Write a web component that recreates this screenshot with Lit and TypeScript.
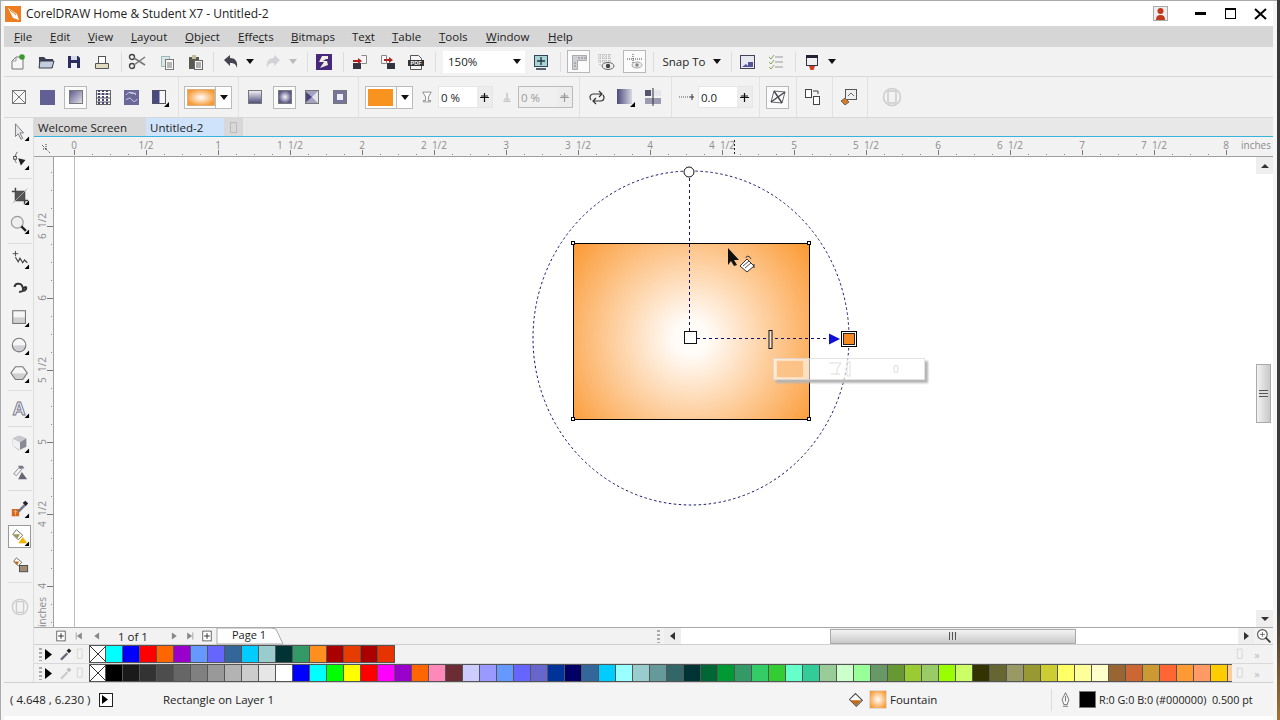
import { LitElement, html, svg, css } from 'lit'
import { customElement } from 'lit/decorators.js'

type Item = { c: number; w: number; t: unknown; cls?: string }

// places items along a flex row/column by their centre, gaps computed from the data
function flow(items: Item[], origin: number, vertical = false) {
  let end = origin
  return items.map((it) => {
    const gap = it.c - it.w / 2 - end
    end = it.c + it.w / 2
    const st = vertical ? `margin-top:${gap}px;height:${it.w}px` : `margin-left:${gap}px;width:${it.w}px`
    return html`<div class="item ${it.cls ?? ''}" style=${st}>${it.t}</div>`
  })
}

const ic = (f: unknown, size = 20) =>
  html`<svg width=${size} height=${size} viewBox="0 0 20 20">${f}</svg>`
const tb = (f: unknown) => html`<svg width="20" height="20" viewBox="0 0 22 22">${f}<path d="M21 16v5h-5z" fill="#000"/></svg>`
const arrow = (c = '#111') => html`<svg width="8" height="5" viewBox="0 0 8 5"><path d="M0 0h8L4 5z" fill=${c}/></svg>`
const sep = (c: number): Item => ({ c, w: 1, t: '', cls: 'sep' })
const b = (c: number, f: unknown, cls = ''): Item => ({ c, w: 22, t: ic(f), cls })

const I = {
  fresh: svg`<path d="M4 9l4-4h7v12H4z" fill="#f6f6f6" stroke="#777"/><path d="M4 9h4V5" fill="none" stroke="#999"/><circle cx="14" cy="5" r="2.800" fill="#3b9a2c"/>`,
  open: svg`<path d="M3 5h5l2 2h7v9H3z" fill="#3a3f52"/><path d="M4 9h14l-2 7H3z" fill="#c4cddb" stroke="#3a3f52"/>`,
  save: svg`<path d="M4 4h10l2 2v10H4z" fill="#2b2d5e"/><rect x="7" y="4" width="6" height="4" fill="#d9dbe8"/><rect x="7" y="11" width="6" height="5" fill="#f0f0f4"/>`,
  print: svg`<rect x="6.500" y="4.500" width="7" height="7" fill="#fff" stroke="#555"/><path d="M3.500 11.500h13v5h-13z" fill="#e0dcc0" stroke="#555"/>`,
  cut: svg`<circle cx="4" cy="5" r="2.500" fill="none" stroke="#444" stroke-width="1.400"/><circle cx="4" cy="14" r="2.500" fill="none" stroke="#444" stroke-width="1.400"/><path d="M6 6l11 7M6 13l11-8" stroke="#777" stroke-width="1.500"/>`,
  copy: svg`<rect x="4.500" y="4.500" width="8" height="10" fill="#dbe7e7" stroke="#9bb"/><rect x="8.500" y="7.500" width="8" height="10" fill="#f6f6f6" stroke="#777"/><path d="M10 11h5M10 13h5M10 15h5" stroke="#777"/>`,
  paste: svg`<rect x="4" y="5" width="10" height="12" fill="#5a594f"/><rect x="7" y="3" width="4" height="4" fill="#c2be9f"/><rect x="9.500" y="8.500" width="8" height="9" fill="#f6f6f6" stroke="#666"/><path d="M11 11h5M11 13h5M11 15h5" stroke="#666"/>`,
  undo: svg`<path d="M3 8l6-5v3c5 0 8 3 7 10-1-4-3-5-7-5v3z" fill="#44444e"/>`,
  redo: svg`<path d="M17 8l-6-5v3c-5 0-8 3-7 10 1-4 3-5 7-5v3z" fill="#d2d2d6"/>`,
  corel: svg`<rect x="2" y="2" width="16" height="16" fill="#47287f"/><path d="M14 4H8L5 10h5l-4 6 8-3-1-4H9l3-2h2z" fill="#f2f0dc"/>`,
  imp: svg`<path d="M11.500 3.500h5v8h-5" fill="#f6f6f6" stroke="#888"/><rect x="3" y="11" width="8" height="6" fill="#33333f"/><path d="M3 8h5V6l4 3-4 3v-2H3z" fill="#b02020"/>`,
  exp: svg`<path d="M3.500 3.500h5v8h-5z" fill="#f6f6f6" stroke="#888"/><rect x="9" y="11" width="8" height="6" fill="#33333f"/><path d="M6 7h5V5l4 3-4 3V9H6z" fill="#b02020"/>`,
  pdf: svg`<path d="M4.500 3.500h8l3 3v11h-11z" fill="#f6f6f6" stroke="#555"/><rect x="2" y="8" width="16" height="6" fill="#333"/><text x="10" y="13" font-size="5.500" font-weight="700" text-anchor="middle" fill="#fff" font-family="Liberation Sans">PDF</text>`,
  fit: svg`<rect x="3.500" y="3.500" width="13" height="11" fill="#a8d4d4" stroke="#345"/><path d="M10 5v8M6 9h8M5 17h10" stroke="#234" stroke-width="1.300"/>`,
  ruler: svg`<path d="M3.500 3.500h14v5h-9v9h-5z" fill="#cfcfd6" stroke="#aaa"/><path d="M10 5v2M13 5v2M16 5v2M5 11h2M5 14h2" stroke="#888"/>`,
  gridEye: svg`<path d="M2 3h13M2 6h13M2 9h13M4 2v11M7 2v11M10 2v11M13 2v11" stroke="#aaa" stroke-dasharray="1 1"/><ellipse cx="12" cy="14" rx="6" ry="3.500" fill="#eee" stroke="#666"/><circle cx="12" cy="14" r="2.200" fill="#444"/>`,
  guideEye: svg`<path d="M2 7h15M8 2v13" stroke="#444" stroke-dasharray="1 1"/><ellipse cx="12" cy="13" rx="5" ry="3" fill="#eee" stroke="#aaa"/><circle cx="12" cy="13" r="1.800" fill="#888"/>`,
  app: svg`<rect x="2.500" y="3.500" width="14" height="13" fill="#e8e8f2" stroke="#445"/><path d="M4 15l4-3 2 2v-4h5v5z" fill="#55549a"/>`,
  options: svg`<path d="M3 5l2 2 3-4M3 10l2 2 3-4M3 15l2 2 3-4" fill="none" stroke="#8aa55a"/><path d="M9 5h8M9 10h8M9 15h8" stroke="#999"/>`,
  full: svg`<rect x="4.500" y="3.500" width="11" height="10" fill="#f0f0f0" stroke="#334"/><rect x="4" y="3" width="12" height="3" fill="#223"/><path d="M7 14h6l-1.500 4h-3z" fill="#d83a20"/>`,
  none: svg`<rect x="3.500" y="3.500" width="13" height="13" fill="#f6f6f6" stroke="#777"/><path d="M3.500 3.500l13 13M16.500 3.500l-13 13" stroke="#777"/>`,
  uniform: svg`<rect x="3" y="3" width="15" height="15" fill="#625f94"/>`,
  fountain: svg`<defs><linearGradient id="fg" x1="0" y1="0" x2="1" y2="1"><stop offset="0" stop-color="#5a5788"/><stop offset="1" stop-color="#e4e4ee"/></linearGradient></defs><rect x="3.500" y="3.500" width="13" height="13" fill="url(#fg)" stroke="#777"/>`,
  pattern: svg`<rect x="3.500" y="3.500" width="14" height="14" fill="#fff" stroke="#666"/><path d="M3 7h15M3 11h15M3 15h15" stroke="#555"/><path d="M6 3v15M10 3v15M14 3v15" stroke="#4a4a7a" stroke-width="2" stroke-dasharray="2 1"/>`,
  texture: svg`<rect x="3" y="3" width="15" height="15" fill="#6a6799"/><path d="M5 8c3-4 8-3 10 0M5 13c3-3 5-2 6 0s4 2 5-1M8 5c2 2 5 2 7 1" fill="none" stroke="#d0d0e4"/>`,
  post: svg`<rect x="3.500" y="3.500" width="13" height="13" fill="#f6f6f6" stroke="#555"/><rect x="3.500" y="3.500" width="7" height="13" fill="#4b4a80"/><path d="M20 15v5h-5z" fill="#000"/>`,
  linear: svg`<defs><linearGradient id="lg" x1="0" y1="0" x2="0" y2="1"><stop offset="0" stop-color="#f4f4f8"/><stop offset="1" stop-color="#4b4a7a"/></linearGradient></defs><rect x="3.500" y="3.500" width="13" height="13" fill="url(#lg)" stroke="#777"/>`,
  elliptical: svg`<defs><radialGradient id="eg"><stop offset="0" stop-color="#f4f4f8"/><stop offset="1" stop-color="#5a5788"/></radialGradient></defs><rect x="3.500" y="3.500" width="13" height="13" fill="url(#eg)" stroke="#777"/>`,
  conical: svg`<rect x="3.500" y="3.500" width="13" height="13" fill="#a4a3bf" stroke="#777"/><path d="M4 10h6L4 5zM4 10h6l-6 5z" fill="#45437a"/><path d="M16 4v12l-6-6z" fill="#e4e4ee"/>`,
  rectangular: svg`<rect x="3.500" y="3.500" width="13" height="13" fill="#76749b" stroke="#777"/><rect x="7" y="7" width="6" height="6" fill="#eeeef5"/>`,
  glass: svg`<path d="M4 3h12l-4 7v5h3v2H5v-2h3v-5z" fill="#fff" stroke="#666"/>`,
  glassOff: svg`<path d="M10 4v8M6 13h8M5 16h10" stroke="#c4c4c4" stroke-width="2"/>`,
  loop: svg`<path d="M4 13c-2-2-1-6 2-6h9M12 4l3 3-3 3M16 8c2 2 1 6-2 6H6M9 11l-3 3 3 3" fill="none" stroke="#333" stroke-width="1.200"/>`,
  mirror: svg`<defs><linearGradient id="mg"><stop offset="0" stop-color="#4b4a7a"/><stop offset="1" stop-color="#d8d8e4"/></linearGradient></defs><rect x="2" y="2" width="15" height="15" fill="url(#mg)"/><path d="M20 15v5h-5z" fill="#000"/>`,
  align: svg`<rect x="2" y="3" width="16" height="6" fill="#55556e"/><rect x="2" y="11" width="16" height="6" fill="#9a9ab0"/><rect x="8" y="3" width="10" height="6" fill="#e6e6ee"/><path d="M10 1v18" stroke="#333"/>`,
  dash: svg`<path d="M2 10h12" stroke="#555" stroke-dasharray="1 1"/><path d="M15 7v6M13 10h4" stroke="#333"/>`,
  free: svg`<path d="M6 4l11 1-3 11-11-1z" fill="none" stroke="#666"/><path d="M6 4l8 12M17 5L3 15" stroke="#445" stroke-width="1.400"/>`,
  swap: svg`<rect x="2.500" y="2.500" width="6" height="8" fill="#fff" stroke="#444"/><rect x="10.500" y="9.500" width="6" height="8" fill="#fff" stroke="#444"/><path d="M10 4h5v3" fill="none" stroke="#444"/>`,
  copyFill: svg`<rect x="6.500" y="2.500" width="11" height="10" fill="#eee" stroke="#555"/><path d="M9 9l3-3 3 3" stroke="#666" fill="none"/><path d="M2 14l4-3 4 4-4 3z" fill="#d87a20" stroke="#666"/>`,
  hint: svg`<circle cx="10" cy="10" r="8.500" fill="none" stroke="#ccc" stroke-width="1.500"/><rect x="6" y="4" width="8" height="12" rx="1" fill="none" stroke="#ccc" stroke-width="1.500"/>`,
  dropper: svg`<path d="M4 16l8-8 2 2-8 8z" fill="#667"/><path d="M12 6l3-3 3 3-3 3z" fill="#222"/>`,
  dropperOff: svg`<path d="M4 16l8-8 2 2-8 8z" fill="#ccc"/><path d="M12 6l3-3 3 3-3 3z" fill="#bbb"/>`,
  chip: svg`<rect x="6" y="3" width="7" height="13" fill="none" stroke="#ccc"/>`,
  bucket: svg`<path d="M10 3l8 8-7 7-8-8z" fill="#fff" stroke="#444" stroke-width="1.200"/><path d="M4 11h13l-6 6z" fill="#c06a1a"/>`,
  pen: svg`<path d="M10 2l4 8-2 6H8l-2-6z" fill="#f4f4f4" stroke="#666"/><path d="M7 18h6M10 6v6" stroke="#666"/>`,
  addPage: svg`<rect x="4" y="3" width="12" height="14" fill="#fff" stroke="#333"/><path d="M10 6v8M6 10h8" stroke="#333" stroke-width="1.400"/>`,
  first: svg`<path d="M6 5v10" stroke="#888"/><path d="M14 5v10l-7-5z" fill="#888"/>`,
  prev: svg`<path d="M13 5v10l-7-5z" fill="#888"/>`,
  next: svg`<path d="M7 5v10l7-5z" fill="#888"/>`,
  last: svg`<path d="M14 5v10" stroke="#888"/><path d="M6 5v10l7-5z" fill="#888"/>`,
  magnify: svg`<circle cx="8" cy="8" r="6" fill="#fff" stroke="#555" stroke-width="1.400"/><path d="M5 8h6M8 5v6" stroke="#555"/><path d="M12 12l6 6" stroke="#333" stroke-width="2"/>`,
}

const T = {
  pick: svg`<path d="M6 2v14l3-3 3 6 2-1-3-6h4z" fill="#e6e6ea" stroke="#777"/>`,
  shape: svg`<path d="M8 1C5 6 4 9 7 13" fill="none" stroke="#555"/><rect x="4" y="6" width="3" height="3" fill="#fff" stroke="#444"/><path d="M9 8l8 2-5 6z" fill="#222"/>`,
  crop: svg`<path d="M6 2v14h14M2 6h14v14" fill="none" stroke="#444" stroke-width="1.600"/><rect x="6" y="6" width="10" height="10" fill="#555"/><path d="M3 19L19 3" stroke="#aaa"/>`,
  zoom: svg`<circle cx="8" cy="8" r="6.500" fill="#eee" stroke="#999" stroke-width="1.300"/><path d="M12.500 12.500l5 5" stroke="#222" stroke-width="2.600"/>`,
  freehand: svg`<path d="M6 1v6M3 4h6" stroke="#444"/><path d="M6 8l3 5 2-4 3 5 2-3 3 3" fill="none" stroke="#444" stroke-width="1.300"/>`,
  smart: svg`<path d="M4 9c0-4 6-5 8-2s1 6 2 6 3-1 3-3-3-1-3 1-3 4-5 3" fill="none" stroke="#333" stroke-width="2.200"/>`,
  rect: svg`<defs><linearGradient id="r1" x1="0" y1="0" x2="0" y2="1"><stop offset=".5" stop-color="#f6f6f6"/><stop offset=".55" stop-color="#d0d0d4"/></linearGradient></defs><rect x="3" y="3" width="14" height="14" fill="url(#r1)" stroke="#777" stroke-width="1.200"/>`,
  ell: svg`<circle cx="10" cy="10" r="7.500" fill="url(#r1)" stroke="#777" stroke-width="1.200"/>`,
  poly: svg`<path d="M6 3h8l5 7-5 7H6l-5-7z" fill="url(#r1)" stroke="#777" stroke-width="1.200"/>`,
  text: svg`<text x="10" y="18" font-size="20" font-weight="700" text-anchor="middle" fill="#eef" stroke="#778" font-family="Liberation Sans">A</text>`,
  cube: svg`<path d="M10 2l8 3v9l-8 4-7-5V5z" fill="#8a8a94"/><path d="M10 2l8 3-7 4-8-4z" fill="#c8c8d0"/><path d="M3 5l8 4v9l-8-5z" fill="#f0f0f4"/>`,
  drop: svg`<path d="M3 12l6-7 3 2-6 7z" fill="none" stroke="#888"/><path d="M8 3h5l2 3H9z" fill="#778"/><path d="M12 10l6 8H8z" fill="#667"/>`,
  eyed: svg`<rect x="2" y="11" width="8" height="8" fill="#d8661c"/><path d="M4 14h4M6 12v6" stroke="#f6c080"/><path d="M8 13l7-7 2 2-7 7z" fill="#778"/><path d="M14 4l3-2 3 3-3 3z" fill="#223"/>`,
  fill: svg`<path d="M7 3l7 6-5 5-6-6z" fill="#fff" stroke="#666"/><path d="M3 8h8l-3 5z" fill="#995"/><path d="M14 11l5 7H9z" fill="#f2b400"/>`,
  smartFill: svg`<path d="M6 2l6 5-4 4-5-5z" fill="#fff" stroke="#666"/><path d="M3 6h6l-2 4z" fill="#c06a1a"/><rect x="9.500" y="10.500" width="9" height="7" fill="#a08a70" stroke="#444"/>`,
}

const menu = [['F', 'ile', 14], ['E', 'dit', 50], ['V', 'iew', 88], ['L', 'ayout', 131], ['O', 'b', 185, 'j', 'ect'], ['E', 'ffe', 238, 'c', 'ts'], ['B', 'itmaps', 291], ['Te', '', 352, 'x', 't'], ['T', 'able', 392], ['T', 'ools', 439], ['W', 'indow', 486], ['H', 'elp', 548]]

const row1 = ['#00ffff', '#0000ff', '#ff0000', '#ff6600', '#9900cc', '#6699ff', '#6666ff', '#336699', '#00ccff', '#99cccc', '#003333', '#339966', '#ff9020', '#aa0000', '#e63c00', '#aa0000', '#e63300']
const row2 = ['#000', '#1a1a1a', '#333', '#4d4d4d', '#666', '#808080', '#999', '#b3b3b3', '#ccc', '#e6e6e6', '#fff', '#00f', '#0ff', '#0f0', '#ff0', '#f00', '#f0f', '#90c', '#f60', '#f8b', '#6b2d33', '#ccf', '#99f', '#69f', '#66f', '#66c', '#039', '#006', '#369', '#0cf', '#9ff', '#9cc', '#699', '#366', '#033', '#063', '#093', '#396', '#3c6', '#3c3', '#6fc', '#3c9', '#9c9', '#cfc', '#9f9', '#696', '#693', '#9c3', '#9c6', '#9f0', '#cf6', '#330', '#663', '#996', '#993', '#cc3', '#ff6', '#ff9', '#ffc', '#963', '#c63', '#c93', '#f63', '#f93', '#f96', '#fc0', '#fc9']

@customElement('app-root')
export class AppRoot extends LitElement {
  static styles = css`
    :host {
      display: block;
      width: 1280px;
      height: 720px;
      overflow: hidden;
      font-family: "Open Sans", "Noto Sans", sans-serif;
      font-size: 11.5px;
      color: #222;
    }
    * { box-sizing: border-box; }
    svg { display: block; flex: none; overflow: visible; }
    .screen { display: flex; height: 720px; background: #f3f3f3; }
    .frameL { width: 4px; border-left: 1px solid #aaa; border-top: 1px solid #aaa; background: #f4f4f4; }
    .frameR { width: 4px; border-top: 1px solid #aaa; background: #f6f6f6; }
    .desk { width: 3px; background: linear-gradient(#3a3a3a 85%, #a5702f); }
    .window { width: 1269px; display: flex; flex-direction: column; }
    .item { display: flex; align-items: center; justify-content: center; flex: none; }
    .sep { background: #dcdcdc; height: 20px; }
    .t2 .sep { height: 40px; background: #e2e2e2; }
    .boxed { border: 1px solid #b8b8b8; background: #fbfbfb; height: 23px; }

    .title { height: 26px; border-top: 1px solid #aaa; background: #fff; display: flex; align-items: center; }
    .titleText { margin-left: 5px; font-size: 12px; flex: none; width: 235px; white-space: nowrap; }
    .logo { margin-left: 1px; }
    .ctl { display: flex; align-items: center; }

    .menu { height: 21px; background: #d6d6d6; display: flex; align-items: center; }
    .menu .m { flex: none; white-space: pre; }
    .tools { display: flex; align-items: center; background: #f2f2f2; border-bottom: 1px solid #d8d8d8; }
    .t1 { height: 30px; }
    .t2 { height: 41px; }

    .combo { height: 22px; background: #fff; justify-content: space-between; padding: 0 4px 0 5px; }
    .snap { white-space: nowrap; }
    .fillbox { height: 23px; border: 1px solid #bbb; background: #fff; justify-content: flex-start; }
    .fillbox .swatch { height: 17px; margin-left: 2px; border: 1px solid #d8b080; }
    .fillbox .dd { margin-left: auto; width: 16px; height: 21px; border-left: 1px solid #bbb; display: flex; align-items: center; justify-content: center; }
    .grad { width: 28px; background: radial-gradient(ellipse at center, #fff 0%, #f89a34 80%); }
    .solid { width: 25px; background: #f7931e; border: 0 !important; }
    .spin { height: 22px; background: #fff; border: 1px solid #e6e6e6; justify-content: space-between; padding-left: 2px; }
    .spin .plus { width: 15px; height: 20px; background: #ececec; display: flex; align-items: center; justify-content: center; font-size: 0; }
    .spin.off { color: #999; border-color: #bbb; background: #f0f0f0; }

    .work { flex: 1; display: flex; min-height: 0; }
    .toolbox { width: 30px; height: 564px; border-right: 1px solid #dcdcdc; padding-left: 2px; display: flex; flex-direction: column; align-items: center; background: #f3f3f3; }
    .vs { width: 24px; background: #dcdcdc; }
    .pressed { width: 23px; border: 1px solid #999; background: #fff; }
    .main { flex: 1; display: flex; flex-direction: column; min-width: 0; }
    .tabs { height: 19px; display: flex; background: #e8e8e8; border-bottom: 1px solid #35b5dd; }
    .tab { display: flex; align-items: center; height: 18px; padding-left: 4px; }
    .tab.w { width: 112px; background: #d8d8d8; }
    .tab.u { width: 78px; background: #cfe3fb; }
    .tab.x { width: 19px; background: #d8d8d8; padding-left: 6px; }
    .rulerH { height: 20px; background: #f2f2f2; border-bottom: 1px solid #a0a0a0; }
    .rulerText { font-family: "Open Sans", sans-serif; font-size: 10px; fill: #8c8c8c; white-space: pre; }
    .canvasRow { height: 470px; display: flex; }
    .rulerV { width: 20px; background: #f2f2f2; border-right: 1px solid #a0a0a0; overflow: hidden; }
    .canvas { width: 1200px; position: relative; background: #fff; overflow: hidden; }
    .scrollV { width: 19px; background: #fff; display: flex; flex-direction: column; padding-left: 2px; }
    .sbtn { width: 17px; height: 17px; background: #eee; display: flex; align-items: center; justify-content: center; }
    .vthumb { width: 15px; height: 59px; margin-top: 190px; border: 1px solid #aaa; background: linear-gradient(90deg, #f2f2f2, #c8c8c8); display: flex; align-items: center; justify-content: center; }
    .grip { width: 9px; height: 8px; background: repeating-linear-gradient(#555 0 1px, #ddd 1px 3px); }
    .vspace { flex: 1; }
    .ghost { position: absolute; left: 719px; top: 201px; width: 152px; height: 22px; background: rgba(255,255,255,.62); border: 1px solid rgba(200,200,200,.5); box-shadow: 3px 3px 2px #b5b5b5; display: flex; align-items: center; color: #d8d8d8; font-size: 10px; }
    .ghost .gs { width: 28px; height: 18px; margin-left: 2px; background: rgba(250,160,70,.5); border: 1px solid rgba(255,255,255,.5); }
    .ghost .gi { margin-left: 22px; }
    .ghost .gn { margin-left: 41px; }

    .pagebar { height: 18px; display: flex; align-items: center; border-top: 1px solid #a8a8a8; border-bottom: 1px solid #cfcfcf; background: #f2f2f2; }
    .hspace { height: 16px; background: #fff; }
    .hthumb { height: 15px; border: 1px solid #aaa; background: linear-gradient(#f4f4f4, #c8c8c8); }
    .hgrip { width: 8px; height: 8px; background: repeating-linear-gradient(90deg, #555 0 1px, #ddd 1px 3px); }
    .btnGray { height: 16px; background: #eee; }
    .pageName { font-size: 11px; fill: #222; }

    .pal { display: flex; align-items: center; background: #f2f2f2; }
    .pal.a { height: 19px; border-bottom: 1px solid #d8d8d8; }
    .pal.b { height: 18px; }
    .dots { height: 13px; background: repeating-linear-gradient(#aaa 0 2px, transparent 2px 4px); }
    .strip { height: 18px; justify-content: flex-start; overflow: hidden; }
    .cell { flex: none; width: 17px; height: 18px; border: 1px solid #555; border-left-width: 0; }
    .cell.n { border-left-width: 1px; background: #fff; display: flex; align-items: center; justify-content: center; }
    .chev { color: #bbb; font-size: 11px; }

    .status { height: 34px; border-top: 1px solid #cfcfcf; display: flex; align-items: center; background: #f4f4f4; white-space: nowrap; }
    .status .sep { height: 22px; }
    .playbox { height: 14px; border: 1px solid #222; background: #fff; }
    .statusSwatch { height: 19px; background: radial-gradient(#fff 0%, #f89a34 85%); border: 1px solid #ddd; }
    .black { height: 17px; background: #000; border: 1px solid #777; }
    .stxt { justify-content: flex-start; }
    .tight { font-size: 10.8px; }
    .foot { height: 4px; background: #fdfdfd; }
  `

  private renderRulerH() {
    const parts: unknown[] = []
    for (let i = 0; i <= 16; i++) {
      const x = 40 + i * 72
      const whole = Math.floor(i / 2)
      const label = i % 2 === 0 ? `${whole}` : whole === 0 ? '1/2' : `${whole}  1/2`
      parts.push(svg`<text class="rulerText" x=${x} y="12" text-anchor="middle">${label}</text><path d="M${x + 0.5} 13v5" stroke="#777"/>`)
      if (i < 16) for (let j = 1; j < 4; j++) parts.push(svg`<rect x=${x + j * 18} y="17" width="1" height="1" fill="#888"/>`)
    }
    return html`<div class="rulerH"><svg width="1239" height="19">
      ${parts}
      <text class="rulerText" x="1207" y="12">inches</text>
      <path d="M700.500 3v16" stroke="#222" stroke-dasharray="2 2"/>
      <path d="M8 8l8 8M12 7v5M9 12h4" stroke="#333" stroke-dasharray="1 1"/>
    </svg></div>`
  }

  private renderRulerV() {
    const parts: unknown[] = []
    const labels: [number, string][] = [[69, '6  1/2'], [141, '6'], [213, '5  1/2'], [285, '5'], [357, '4  1/2'], [429, '4']]
    for (const [y, t] of labels) {
      parts.push(svg`<text class="rulerText" transform="translate(12 ${y}) rotate(-90)" text-anchor="middle">${t}</text><path d="M13 ${y + 0.5}h6" stroke="#777"/>`)
    }
    for (let y = -3; y < 470; y += 18) parts.push(svg`<rect x="17" y=${y} width="1" height="1" fill="#888"/>`)
    return html`<div class="rulerV"><svg width="19" height="470">${parts}
      <text class="rulerText" transform="translate(12 470) rotate(-90)">inches</text></svg></div>`
  }

  private renderCanvas() {
    return html`<div class="canvas">
      <svg width="1200" height="470" viewBox="54 157 1200 470">
        <defs>
          <radialGradient id="fill" gradientUnits="userSpaceOnUse" cx="691" cy="338" r="158">
            <stop offset="0" stop-color="#ffffff"/>
            <stop offset=".12" stop-color="#fffaf5"/>
            <stop offset="1" stop-color="#fb9327"/>
          </radialGradient>
        </defs>
        <path d="M74.500 157v470" stroke="#bbb"/>
        <rect x="573.500" y="243.500" width="236" height="176" fill="url(#fill)" stroke="#000"/>
        <ellipse cx="691" cy="338" rx="158" ry="167" fill="none" stroke="#14146e" stroke-dasharray="2.500 2.500"/>
        <path d="M689.500 172V331M697 338.500H830" stroke="#14146e" stroke-dasharray="3 3" fill="none"/>
        ${[[573, 243], [809, 243], [573, 419], [809, 419]].map(([x, y]) => svg`<rect x=${x - 1.5} y=${y - 1.5} width="3" height="3" fill="#fff" stroke="#000"/>`)}
        <circle cx="689" cy="172" r="5" fill="#fff" stroke="#111"/>
        <rect x="684.500" y="331.500" width="12" height="12" fill="#fff" stroke="#111"/>
        <rect x="769" y="330.500" width="3" height="18" fill="#fde6d2" stroke="#111"/>
        <path d="M829 333.500v11l11-5.500z" fill="#1010d8"/>
        <rect x="841.500" y="331.500" width="15" height="15" fill="#fff" stroke="#000"/>
        <rect x="843.500" y="333.500" width="11" height="11" fill="#f48a20" stroke="#222"/>
        <path d="M728 248v17l3-4 3 5 3-1-3-5h5z" fill="#111"/>
        <path d="M740 266l7-7 7 7-7 6z" fill="#fff" stroke="#333"/>
        <path d="M743 266l6-5M745 268l6-5" stroke="#555"/>
        <path d="M746 258c0-3 4-2 5 1M754 264v4" fill="none" stroke="#333"/>
      </svg>
      <div class="ghost">
        <div class="gs"></div>
        <svg class="gi" width="20" height="18" viewBox="0 0 20 18"><path d="M3 3h12l-4 6v5h3M5 14h6" fill="none" stroke="#ddd"/></svg>
        <svg width="6" height="18" viewBox="0 0 6 18"><rect x="1" y="2" width="3" height="14" fill="none" stroke="#ddd"/></svg>
        <div class="gn">0</div>
      </div>
    </div>`
  }

  private renderPalette(cls: string, colors: string[], faded: boolean) {
    const cells = html`<div class="cell n"><svg width="16" height="16"><path d="M0 0l16 16M16 0L0 16" stroke="#333"/></svg></div>${colors.map((c) => html`<div class="cell" style="background:${c}"></div>`)}`
    return html`<div class="pal ${cls}">${flow([
      { c: 40, w: 3, t: '', cls: 'dots' },
      { c: 49, w: 10, t: html`<svg width="8" height="11" viewBox="0 0 8 11"><path d="M0 0v11l7-5.500z" fill="#000"/></svg>` },
      { c: 65, w: 20, t: ic(faded ? I.dropperOff : I.dropper, 16) },
      { c: 80, w: 10, t: ic(I.chip, 14) },
      { c: 660.5, w: 1143, t: cells, cls: 'strip' },
      { c: 1240, w: 14, t: ic(I.chip, 14) },
      { c: 1257, w: 14, t: '»', cls: 'chev' },
    ], 34)}</div>`
  }

  render() {
    const t1: Item[] = [
      b(18, I.fresh), b(46, I.open), b(74, I.save), b(102, I.print), sep(121),
      b(138, I.cut), b(167, I.copy), b(195, I.paste), sep(213),
      b(231, I.undo), { c: 250, w: 8, t: arrow() }, b(273, I.redo), { c: 293, w: 8, t: arrow('#bbb') }, sep(307),
      b(324, I.corel), sep(343), b(360, I.imp), b(388, I.exp), b(416, I.pdf), sep(435),
      { c: 484, w: 82, t: html`<span>150%</span>${arrow()}`, cls: 'combo' },
      b(541, I.fit), sep(560),
      { c: 578.5, w: 23, t: ic(I.ruler), cls: 'boxed' }, b(606, I.gridEye),
      { c: 634.5, w: 23, t: ic(I.guideEye), cls: 'boxed' }, sep(653),
      { c: 684, w: 44, t: html`<span class="snap">Snap To</span>` }, { c: 717, w: 8, t: arrow() }, sep(731),
      b(748, I.app), b(776, I.options), sep(795), b(812, I.full), { c: 832, w: 8, t: arrow() },
    ]
    const plus = (c: string) => html`<div class="plus"><svg width="11" height="11" viewBox="0 0 11 11"><path d="M5.500 1v9M1 5.500h9M2 4h7" stroke=${c} stroke-width="1.200"/></svg></div>`
    const t2: Item[] = [
      b(19, I.none), b(47, I.uniform), { c: 75.5, w: 23, t: ic(I.fountain), cls: 'boxed' }, b(103, I.pattern), b(131, I.texture), b(159, I.post), sep(178),
      { c: 208, w: 48, t: html`<div class="swatch grad"></div><div class="dd">${arrow()}</div>`, cls: 'fillbox' }, sep(238),
      b(255, I.linear), { c: 284.5, w: 23, t: ic(I.elliptical), cls: 'boxed' }, b(312, I.conical), b(340, I.rectangular), sep(358),
      { c: 389, w: 48, t: html`<div class="swatch solid"></div><div class="dd">${arrow()}</div>`, cls: 'fillbox' },
      { c: 427, w: 14, t: ic(I.glass, 14) },
      { c: 465.5, w: 55, t: html`<span>0 %</span>${plus('#111')}`, cls: 'spin' },
      { c: 507, w: 14, t: ic(I.glassOff, 14) },
      { c: 545.5, w: 55, t: html`<span>0 %</span>${plus('#999')}`, cls: 'spin off' }, sep(579),
      b(597, I.loop), b(625, I.mirror), b(653, I.align), sep(671), b(687, I.dash),
      { c: 725.5, w: 55, t: html`<span>0.0</span>${plus('#111')}`, cls: 'spin' }, sep(759),
      { c: 777.5, w: 23, t: ic(I.free), cls: 'boxed' }, sep(796), b(813, I.swap), sep(832), b(849, I.copyFill), sep(867), b(892, I.hint),
    ]
    const tv = (c: number, f: unknown, cls = ''): Item => ({ c, w: 22, t: tb(f), cls })
    const vs = (c: number): Item => ({ c, w: 1, t: '', cls: 'vs' })
    const box: Item[] = [
      tv(132, T.pick), tv(161, T.shape), vs(178), tv(196, T.crop), tv(225, T.zoom), vs(243),
      tv(260, T.freehand), { c: 288, w: 22, t: ic(T.smart, 18) }, tv(318, T.rect), tv(346, T.ell), tv(374, T.poly), vs(390),
      tv(409, T.text), vs(426), tv(444, T.cube), { c: 472, w: 22, t: ic(T.drop, 18) }, vs(490), tv(509, T.eyed),
      { c: 536.5, w: 23, t: tb(T.fill), cls: 'pressed' }, { c: 565, w: 22, t: ic(T.smartFill, 18) }, vs(582), { c: 607, w: 22, t: ic(I.hint, 18) },
    ]
    const page: Item[] = [
      { c: 61, w: 14, t: ic(I.addPage, 14) }, { c: 79, w: 14, t: ic(I.first, 14) }, { c: 97, w: 14, t: ic(I.prev, 14) },
      { c: 133, w: 50, t: html`<span>1 of 1</span>` },
      { c: 174, w: 14, t: ic(I.next, 14) }, { c: 190, w: 14, t: ic(I.last, 14) }, { c: 207, w: 14, t: ic(I.addPage, 14) },
      { c: 250, w: 66, t: html`<svg width="66" height="16"><path d="M0 0V16H66L59 1 54 0z" fill="#fff" stroke="#aaa"/><text class="pageName" x="32" y="11" text-anchor="middle">Page 1</text></svg>` },
      { c: 658, w: 3, t: '', cls: 'dots' },
      { c: 672.5, w: 17, t: html`<svg width="6" height="8"><path d="M5 0v8L0 4z" fill="#333"/></svg>`, cls: 'btnGray' },
      { c: 755.5, w: 149, t: '', cls: 'hspace' },
      { c: 953, w: 246, t: html`<div class="hgrip"></div>`, cls: 'hthumb' },
      { c: 1157, w: 162, t: '', cls: 'hspace' },
      { c: 1246, w: 16, t: html`<svg width="6" height="8"><path d="M1 0v8l5-4z" fill="#333"/></svg>`, cls: 'btnGray' },
      { c: 1264, w: 16, t: ic(I.magnify, 16) },
    ]
    const status: Item[] = [
      { c: 52, w: 84, t: '( 4.648 , 6.230  )', cls: 'stxt' },
      { c: 105.5, w: 14, t: html`<svg width="7" height="9"><path d="M0 0v9l6-4.500z" fill="#000"/></svg>`, cls: 'playbox' },
      { c: 217, w: 108, t: 'Rectangle on Layer 1', cls: 'stxt' },
      { c: 855, w: 18, t: ic(I.bucket, 17) },
      { c: 878, w: 18, t: '', cls: 'statusSwatch' },
      { c: 913.5, w: 47, t: 'Fountain', cls: 'stxt' },
      { c: 1051, w: 1, t: '', cls: 'sep' },
      { c: 1065, w: 16, t: ic(I.pen, 17) },
      { c: 1087, w: 17, t: '', cls: 'black' },
      { c: 1177, w: 156, t: html`<span>R:0 G:0 B:0 (#000000)&nbsp; 0.500 pt</span>`, cls: 'stxt tight' },
    ]
    return html`<div class="screen">
      <div class="frameL"></div>
      <div class="window">
        <div class="title">
          <svg class="logo" width="16" height="16" viewBox="0 0 16 16"><rect width="16" height="16" fill="#ee7d1f"/><path d="M3 2l9 6 2 6-6-2zM2 8l5 6" fill="#fff"/><path d="M5 4l6 5" stroke="#ee7d1f"/></svg>
          <span class="titleText">CorelDRAW Home &amp; Student X7 - Untitled-2</span>
          <div class="ctl">${flow([
            { c: 1160.5, w: 15, t: html`<svg width="15" height="15" viewBox="0 0 15 15"><rect x=".5" y=".5" width="14" height="14" fill="#eee" stroke="#aaa"/><circle cx="7.500" cy="5" r="3" fill="#c23a1e"/><path d="M3 14c0-4 2-5 4.500-5s4.500 1 4.500 5z" fill="#c23a1e"/></svg>` },
            { c: 1200.5, w: 11, t: html`<svg width="11" height="3"><rect width="11" height="3" fill="#000"/></svg>` },
            { c: 1230.5, w: 11, t: html`<svg width="11" height="11"><rect x=".5" y=".5" width="10" height="10" fill="none" stroke="#000"/><rect width="11" height="2" fill="#000"/></svg>` },
            { c: 1260.5, w: 13, t: html`<svg width="13" height="12"><path d="M1 1l11 10M12 1L1 11" stroke="#000" stroke-width="2"/></svg>` },
          ], 261)}</div>
        </div>
        <div class="menu">${menu.map((m, i) => {
          const next = i < menu.length - 1 ? (menu[i + 1][2] as number) : 600
          const x = m[2] as number
          const first = i === 0 ? x - 4 : 0
          return html`<span class="m" style="width:${next - x}px;margin-left:${first}px">${m[0] === 'Te' ? 'Te' : html`<u>${m[0]}</u>`}${m[1]}${m[3] ? html`<u>${m[3]}</u>${m[4]}` : ''}</span>`
        })}</div>
        <div class="tools t1">${flow(t1, 4)}</div>
        <div class="tools t2">${flow(t2, 4)}</div>
        <div class="work">
          <div class="toolbox">${flow(box, 118, true)}</div>
          <div class="main">
            <div class="tabs">
              <div class="tab w">Welcome Screen</div>
              <div class="tab u">Untitled-2</div>
              <div class="tab x"><svg width="7" height="11"><rect x=".5" y=".5" width="6" height="10" fill="none" stroke="#bbb"/></svg></div>
            </div>
            ${this.renderRulerH()}
            <div class="canvasRow">
              ${this.renderRulerV()}
              ${this.renderCanvas()}
              <div class="scrollV">
                <div class="sbtn"><svg width="8" height="4"><path d="M0 4h8L4 0z" fill="#333"/></svg></div>
                <div class="vthumb"><div class="grip"></div></div>
                <div class="vspace"></div>
                <div class="sbtn"><svg width="8" height="4"><path d="M0 0h8L4 4z" fill="#333"/></svg></div>
              </div>
            </div>
            <div class="pagebar">${flow(page, 34)}</div>
            ${this.renderPalette('a', row1, false)}
            ${this.renderPalette('b', row2, true)}
          </div>
        </div>
        <div class="status">${flow(status, 4)}</div>
        <div class="foot"></div>
      </div>
      <div class="frameR"></div>
      <div class="desk"></div>
    </div>`
  }
}

declare global {
  interface HTMLElementTagNameMap {
    'app-root': AppRoot
  }
}
